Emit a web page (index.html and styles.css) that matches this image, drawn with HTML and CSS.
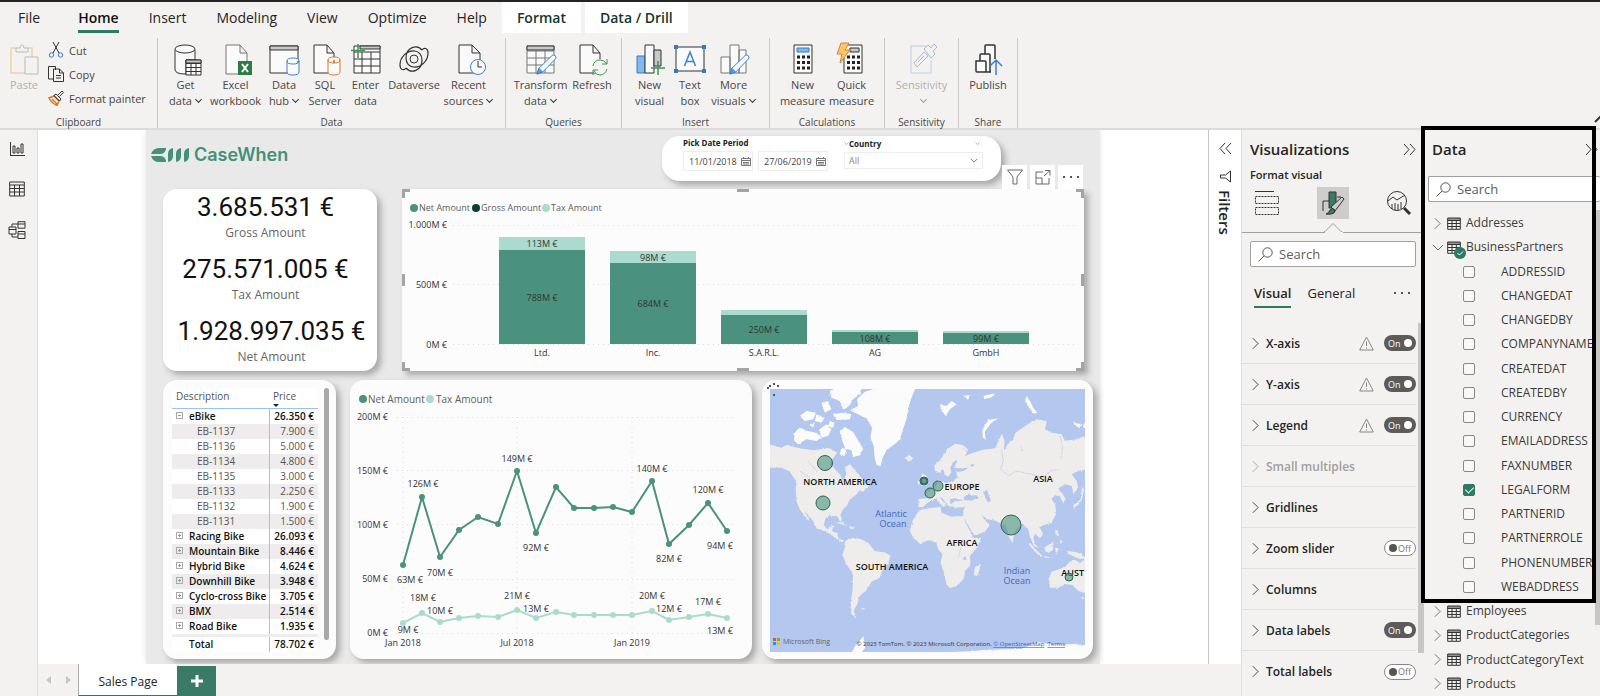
FILE: index.html
```
<!DOCTYPE html>
<html lang="en">
<head>
<meta charset="utf-8">
<title>Sales Page - Report editor</title>
<link rel="stylesheet" href="styles.css">
</head>
<body>
<svg class="defs" width="0" height="0" aria-hidden="true">
  <symbol id="chev-r" viewBox="0 0 8 14"><path d="M1 1l6 6-6 6"/></symbol>
  <symbol id="chev-d" viewBox="0 0 12 7"><path d="M1 1l5 5 5-5"/></symbol>
  <symbol id="dbl-r" viewBox="0 0 13 13"><path d="M1 1l5 5.500-5 5.500M7 1l5 5.500-5 5.500"/></symbol>
  <symbol id="warn" viewBox="0 0 15 15"><path d="M7.500 1L14.300 14H.7zM7.500 5.500v4.500M7.500 11.300v1.200"/></symbol>
  <symbol id="lens" viewBox="0 0 15 15"><circle cx="9.500" cy="5.500" r="4.700"/><path d="M6 9L.6 14.400"/></symbol>
  <symbol id="table" viewBox="0 0 14 13"><path d="M.7 1h12.600v11.300H.7zM.7 3.500h12.600M.7 6.500h12.600M.7 9.500h12.600M5 3v9M9.300 3v9M.7 2h12.600"/></symbol>
  <symbol id="cal" viewBox="0 0 10 9"><path d="M.5 1.500h9v7h-9zM.5 3.500h9M2.500 0v2M7.500 0v2M2 5.500h6M2 7h6" /></symbol>
  <symbol id="pencil" viewBox="0 0 22 22"><path class="lightblue" d="M1 21l2-6L17 1.500q2-1 3.200.3t.3 3.200L7 19z"/><path class="deepblue" d="M1 21l2-6 4 4z"/></symbol>
</svg>
<div class="app">
  <header class="ribbon">
    <nav class="tabs">
      <button class="tab tab-file">File</button>
      <button class="tab active"><span>Home</span></button>
      <button class="tab">Insert</button>
      <button class="tab">Modeling</button>
      <button class="tab">View</button>
      <button class="tab">Optimize</button>
      <button class="tab">Help</button>
      <button class="tab context">Format</button>
      <button class="tab context">Data / Drill</button>
    </nav>
    <div class="groups">
      <section class="group g-clip">
        <div class="tools">
          <button class="tool w-48 disabled">
            <svg viewBox="0 0 32 32"><path stroke="#ecd3a8" stroke-width="1.500" d="M9 4H3v25h14M19 4h5v9"/><path stroke="#bbb" d="M8 8V4h4q0-3 2-3t2 3h4v4zM17 13h13v17H17z"/></svg>
            Paste</button>
          <div class="stack">
            <button class="mini"><svg viewBox="0 0 16 16"><path d="M5 0l6 11M11 0L5 11"/><circle class="blue" cx="3.500" cy="13" r="2.200"/><circle class="blue" cx="12.500" cy="13" r="2.200"/></svg>Cut</button>
            <button class="mini"><svg viewBox="0 0 16 16"><path d="M5 13H.5V.5h7V4M5.500 3h6l4 4v8.500h-10zM11.500 3v4h4M8 9.500h5M8 12h5"/></svg>Copy</button>
            <button class="mini"><svg viewBox="0 0 16 16"><path class="orange" stroke-width="1.500" d="M1 8l5-2 5 5-2 4.500q-5-2-8-7.500zM4 9l5 5"/><path d="M6 5.500L8 4l5 5-1.500 2zM10 5l4-4 1.500 1.500-4 4"/></svg>Format painter</button>
          </div>
        </div>
        <h2>Clipboard</h2>
      </section>
      <section class="group g-data">
        <div class="tools">
          <button class="tool w-46"><svg viewBox="0 0 32 32"><path class="w" d="M5 6v20q1 4 10 4h1V16h9V6"/><ellipse class="w" cx="15" cy="5" rx="10" ry="4"/><path class="w" d="M16 16h15v15H16z"/><path class="grey" d="M16 16h15v3H16z"/><path d="M16 19.500h15M16 23.500h15M16 27.500h15M21 19v12M26 19v12"/></svg>Get<br>data<i class="caret"></i></button>
          <button class="tool w-54"><svg viewBox="0 0 32 32"><path class="w pale" d="M6 1h14l7 8v21H6zM20 1v8h7"/><path class="fill-green" d="M18 17h14v14H18z"/><path stroke="#fff" stroke-width="2" d="M22 20l6 8M28 20l-6 8"/></svg>Excel<br>workbook</button>
          <button class="tool w-43"><svg viewBox="0 0 32 32"><path class="w" d="M2 2h28v27H2z"/><path class="grey" d="M2 2h28v4H2z"/><path class="w blue" d="M19 17q0-3 6-3t6 3v11q0 3-6 3t-6-3zM19 17q0 3 6 3t6-3"/></svg>Data<br>hub<i class="caret"></i></button>
          <button class="tool w-39"><svg viewBox="0 0 32 32"><path class="w" d="M5 1h13l7 8v20H5zM18 1v8h7"/><path class="w orange" d="M19 16q0-3 6-3t6 3v12q0 3-6 3t-6-3zM19 16q0 3 6 3t6-3"/></svg>SQL<br>Server</button>
          <button class="tool w-42"><svg viewBox="0 0 32 32"><path class="w" d="M4 2h26v27H4zM4 8h26M4 15h26M4 22h26M12 8v21M21 8v21"/><path class="grey" d="M10 2h20v3H10z"/><path class="green" stroke-width="1.500" d="M8 0v14M1 6.500h14"/></svg>Enter<br>data</button>
          <button class="tool w-55"><svg viewBox="0 0 32 32"><circle cx="16" cy="15" r="4"/><path stroke-width="1.200" d="M15 23c8 1 15-6 15-14 0-5-4-6-6-3M24 6c-5-6-16-3-16 8 0 5 3 9 8 9M17 7C9 6 2 13 2 21c0 5 4 6 6 3M8 24c5 6 16 3 16-8 0-5-3-9-8-9"/></svg>Dataverse</button>
          <button class="tool w-54"><svg viewBox="0 0 32 32"><path class="w" d="M6 1h13l8 8v20H6zM19 1v8h8"/><circle class="w blue" cx="25" cy="23" r="7.500"/><path d="M25 17v6h4"/></svg>Recent<br>sources<i class="caret"></i></button>
        </div>
        <h2>Data</h2>
      </section>
      <section class="group g-queries">
        <div class="tools">
          <button class="tool w-57"><svg viewBox="0 0 32 32"><path class="w pale" d="M2 2h27v27H2zM2 7h27M2 14h27M2 21h27M11 7v22M20 7v22"/><path class="grey" d="M2 2h27v4H2z"/><use href="#pencil" x="11" y="10" width="21" height="21"/></svg>Transform<br>data<i class="caret"></i></button>
          <button class="tool w-46"><svg viewBox="0 0 32 32"><path class="w" d="M4 1h13l7 8v20H4zM17 1v8h7"/><circle cx="24" cy="23" r="8" fill="#f3f2f1" stroke="none"/><path class="green" d="M17 22q1-6 7-6 4 0 7 4M31 15v5h-5M31 25q-2 6-7 6-4 0-6-4M17 31v-5h5"/></svg>Refresh</button>
        </div>
        <h2>Queries</h2>
      </section>
      <section class="group g-insert">
        <div class="tools">
          <button class="tool w-42"><svg viewBox="0 0 32 32"><path class="fill-blue" d="M3 12h8v17H3z"/><path class="w" d="M11 1h9v28h-9z"/><path class="grey" d="M20 6h7v16h-7z"/><path class="green" stroke-width="1.500" d="M24 17v14M17 24h14"/></svg>New<br>visual</button>
          <button class="tool w-39"><svg viewBox="0 0 32 32"><path class="w" d="M2 3h28v24H2z"/><path fill="#3a78bd" stroke="none" d="M0 1h4v4H0zM28 1h4v4h-4zM0 25h4v4H0zM28 25h4v4h-4z"/><path class="blue" stroke-width="1.500" d="M10.500 22L16 8l5.500 14M12.500 17.500h7"/></svg>Text<br>box</button>
          <button class="tool w-48"><svg viewBox="0 0 32 32"><path class="w pale" d="M3 13h9v16H3zM12 1h9v28h-9zM21 6h7v23h-7z"/><use href="#pencil" x="11" y="10" width="21" height="21"/></svg>More<br>visuals<i class="caret"></i></button>
        </div>
        <h2>Insert</h2>
      </section>
      <section class="group g-calc">
        <div class="tools">
          <button class="tool w-49"><svg viewBox="0 0 32 32"><path class="w" d="M7 1h18v28H7z"/><path class="fill-blue" d="M10 4h12v4H10z"/><path class="dots" d="M10 13h13M10 18.500h13M10 24h13"/></svg>New<br>measure</button>
          <button class="tool w-49"><svg viewBox="0 0 32 32"><path class="w" d="M8 1h18v28H8z"/><path class="grey" d="M14 4h9v4h-9z"/><path class="dots" d="M11 13h13M11 18.500h13M11 24h13"/><path fill="#f9c56b" stroke="#d8832b" d="M5-1h8l-4 7h5L4 19l2-9H1z"/></svg>Quick<br>measure</button>
        </div>
        <h2>Calculations</h2>
      </section>
      <section class="group g-sens">
        <div class="tools">
          <button class="tool w-57 disabled"><svg viewBox="0 0 32 32"><path stroke="#b9cde2" d="M20 2H5v27h20V17"/><path stroke="#a9bccf" d="M8 19L18 8l4 4-11 11zM12 18l6-6M18 5l4-4 3 3 3-4 3 3-4 4 2 3-4 4z"/></svg>Sensitivity<br><i class="caret"></i></button>
        </div>
        <h2>Sensitivity</h2>
      </section>
      <section class="group g-share">
        <div class="tools">
          <button class="tool w-49"><svg viewBox="0 0 32 32"><path class="w bold" d="M13 10V2q0-1 1-1h8q1 0 1 1v13M8 17v-6q0-1 1-1h8q1 0 1 1v17M4 17h9q1 0 1 1v10H5q-1 0-1-1zM14 28h5"/><path class="blue bold" d="M24 31V16M18 22l6-6 6 6"/></svg>Publish</button>
        </div>
        <h2>Share</h2>
      </section>
    </div>
  </header>

  <nav class="rail">
    <button aria-label="Report view"><svg viewBox="0 0 16 16"><path d="M1.500 1v14M1 14.500h15M4 5h2v7H4zM8 7h2v5H8zM12 3h2v9h-2z"/></svg></button>
    <button aria-label="Data view"><svg viewBox="0 0 16 16"><path d="M.7 1h14.600v14H.7zM.7 4h14.600M.7 7.500h14.600M.7 11h14.600M5.500 4v11M10.500 4v11"/></svg></button>
    <button aria-label="Model view"><svg viewBox="0 0 18 18"><path d="M1 6h7v7H1zM1 8.500h7M10 .7h7v6.500h-7zM10 3h7M10 10.500h7v7h-7zM10 13h7M4 6V3h6M4 13v3h6"/></svg></button>
  </nav>

  <main class="canvas">
    <div class="page">
      <div class="page-head">
        <div class="logo">
          <svg viewBox="0 0 39 15"><path d="M15 0v1q-1 5-6 5H0Q2 0 8 0zM0 8h9q5 0 6 5v1H8Q2 14 0 8zM17 14V6q0-5 5-6v8q0 5-5 6zM25 14V6q0-5 5-6v8q0 5-5 6zM33 14V6q0-5 5-6v8q0 5-5 6z"/></svg>
          <span>CaseWhen</span>
        </div>
        <div class="slicers">
          <fieldset class="dates">
            <legend>Pick Date Period</legend>
            <label><input type="text" value="11/01/2018" aria-label="Start date"><svg viewBox="0 0 10 9"><use href="#cal"/></svg></label>
            <label><input type="text" value="27/06/2019" aria-label="End date"><svg viewBox="0 0 10 9"><use href="#cal"/></svg></label>
          </fieldset>
          <div class="country">
            <div class="country-head"><svg viewBox="0 0 12 7"><use href="#chev-d"/></svg><label for="country">Country</label><svg class="end" viewBox="0 0 12 7"><use href="#chev-d"/></svg></div>
            <div class="select"><select id="country"><option>All</option></select><svg viewBox="0 0 12 7"><use href="#chev-d"/></svg></div>
          </div>
        </div>
      </div>
      <div class="row top-row">
        <section class="card kpis">
          <dl><dd>3.685.531 €</dd><dt>Gross Amount</dt></dl>
          <dl><dd>275.571.005 €</dd><dt>Tax Amount</dt></dl>
          <dl class="wide"><dd>1.928.997.035 €</dd><dt>Net Amount</dt></dl>
        </section>
        <section class="card bars">
          <div class="visual-tools">
            <button aria-label="Filters"><svg viewBox="0 0 16 16"><path d="M.5 1h15L10 8v7H6V8z"/></svg></button>
            <button aria-label="Focus mode"><svg viewBox="0 0 16 16"><path d="M8 3H1v12h13V9M1 9h6v6M10 1.500h5v5M15 1.500L9 7"/></svg></button>
            <button aria-label="More options"><svg viewBox="0 0 16 16"><path class="pips" d="M0 7h2v2H0zM7 7h2v2H7zM14 7h2v2h-2z"/></svg></button>
          </div>
          <svg class="chart" viewBox="0 0 682 182" role="img" aria-label="Net, gross and tax amount by legal form">
            <g class="legend small"><circle class="net" cx="12" cy="19" r="4"/><text x="17" y="22">Net Amount</text><circle class="gross" cx="74" cy="19" r="4"/><text x="79" y="22">Gross Amount</text><circle class="tax" cx="144" cy="19" r="4"/><text x="149" y="22">Tax Amount</text></g>
            <path class="grid" d="M51 36.500h623M51 95.500h623M51 155.500h623"/>
            <g class="ends"><text x="45" y="39">1.000M €</text><text x="45" y="99">500M €</text><text x="45" y="159">0M €</text></g>
            <path class="net" d="M97 61h86v94H97zM208 74h86v81h-86zM319 126h86v29h-86zM430 143h86v12h-86zM541 144h86v11h-86z"/>
            <path class="tax" d="M97 48h86v13H97zM208 62h86v12h-86zM319 121h86v5h-86zM430 141h86v2h-86zM541 142h86v2h-86z"/>
            <g class="mid"><text x="140" y="58">113M €</text><text x="140" y="112">788M €</text><text x="251" y="72">98M €</text><text x="251" y="118">684M €</text><text x="362" y="144">250M €</text><text x="473" y="153">108M €</text><text x="584" y="153">99M €</text>
            <text x="140" y="167">Ltd.</text><text x="251" y="167">Inc.</text><text x="362" y="167">S.A.R.L.</text><text x="473" y="167">AG</text><text x="584" y="167">GmbH</text></g>
            <path class="handles" d="M0 0h8v3H3v6H0zM674 0h8v9h-3V3h-5zM0 173h3v6h5v3H0zM679 173h3v9h-8v-3h5zM335 0h12v3h-12zM335 179h12v3h-12zM0 85h3v12H0zM679 85h3v12h-3z"/>
          </svg>
        </section>
      </div>
      <div class="row bottom-row">
        <section class="card matrix">
          <table>
            <thead><tr><th>Description</th><th class="sorted">Price</th></tr></thead>
            <tbody>
              <tr class="parent"><th><i class="tog minus"></i>eBike</th><td>26.350 €</td></tr>
              <tr><th>EB-1137</th><td>7.900 €</td></tr>
              <tr><th>EB-1136</th><td>5.000 €</td></tr>
              <tr><th>EB-1134</th><td>4.800 €</td></tr>
              <tr><th>EB-1135</th><td>3.000 €</td></tr>
              <tr><th>EB-1133</th><td>2.250 €</td></tr>
              <tr><th>EB-1132</th><td>1.900 €</td></tr>
              <tr><th>EB-1131</th><td>1.500 €</td></tr>
              <tr class="parent"><th><i class="tog"></i>Racing Bike</th><td>26.093 €</td></tr>
              <tr class="parent"><th><i class="tog"></i>Mountain Bike</th><td>8.446 €</td></tr>
              <tr class="parent"><th><i class="tog"></i>Hybrid Bike</th><td>4.624 €</td></tr>
              <tr class="parent"><th><i class="tog"></i>Downhill Bike</th><td>3.948 €</td></tr>
              <tr class="parent"><th><i class="tog"></i>Cyclo-cross Bike</th><td>3.705 €</td></tr>
              <tr class="parent"><th><i class="tog"></i>BMX</th><td>2.514 €</td></tr>
              <tr class="parent"><th><i class="tog"></i>Road Bike</th><td>1.935 €</td></tr>
            </tbody>
            <tfoot><tr><th>Total</th><td>78.702 €</td></tr></tfoot>
          </table>
          <div class="scroll"></div>
        </section>
        <section class="card lines">
          <svg class="chart" viewBox="0 0 402 279" role="img" aria-label="Net and tax amount by month">
            <defs>
              <marker id="net-dot" viewBox="0 0 6 6" refX="3" refY="3" markerWidth="6" markerHeight="6" markerUnits="userSpaceOnUse"><circle class="net" cx="3" cy="3" r="3" stroke="none"/></marker>
              <marker id="tax-dot" viewBox="0 0 6 6" refX="3" refY="3" markerWidth="6" markerHeight="6" markerUnits="userSpaceOnUse"><circle class="tax" cx="3" cy="3" r="3" stroke="none"/></marker>
            </defs>
            <g class="legend"><circle class="net" cx="13" cy="19" r="4"/><text x="18" y="23">Net Amount</text><circle class="tax" cx="80" cy="19" r="4"/><text x="86" y="23">Tax Amount</text></g>
            <path class="grid" d="M47 37.500h338M47 90.500h338M47 144.500h338M47 199.500h338M47 253.500h338M53 37v216M167 37v216M282 37v216"/>
            <g class="ends"><text x="38" y="40">200M €</text><text x="38" y="94">150M €</text><text x="38" y="148">100M €</text><text x="38" y="202">50M €</text><text x="38" y="256">0M €</text></g>
            <polyline class="line net-line" points="53,185 72,117 90,177 109,150 128,137 148,144 167,91 186,153 206,107 224,128 244,128 263,127 282,132 302,101 319,164 339,145 358,123 377,151"/>
            <polyline class="line tax-line" points="53,243 72,233 90,242 109,238 128,236 148,237 167,230 186,238 206,232 224,235 244,235 263,235 282,235 302,231 319,240 339,237 358,234 377,238"/>
            <g class="mid"><text x="73" y="107">126M €</text><text x="167" y="82">149M €</text><text x="302" y="92">140M €</text><text x="358" y="113">120M €</text><text x="186" y="171">92M €</text><text x="319" y="182">82M €</text><text x="370" y="169">94M €</text><text x="90" y="196">70M €</text><text x="60" y="203">63M €</text><text x="73" y="221">18M €</text><text x="90" y="234">10M €</text><text x="167" y="219">21M €</text><text x="186" y="232">13M €</text><text x="302" y="219">20M €</text><text x="319" y="232">12M €</text><text x="358" y="225">17M €</text><text x="370" y="254">13M €</text><text x="58" y="253">9M €</text>
            <text x="53" y="266">Jan 2018</text><text x="167" y="266">Jul 2018</text><text x="282" y="266">Jan 2019</text></g>
          </svg>
        </section>
        <section class="card map">
          <svg class="chart" viewBox="0 0 315 263" role="img" aria-label="Map of sales by country">
            <defs><filter id="coast" x="0" y="0" width="100%" height="100%"><feTurbulence type="fractalNoise" baseFrequency=".14" numOctaves="3" seed="4"/><feDisplacementMap in="SourceGraphic" scale="7" xChannelSelector="R" yChannelSelector="G"/></filter></defs>
            <rect class="sea" width="315" height="263"/>
            <svg viewBox="61 54 944 789" width="315" height="263" preserveAspectRatio="none">
              <g filter="url(#coast)">
                <path class="ice" d="M300 118L325 105 322 85 345 62 400 45H500L485 80 475 110 470 145 458 180 450 205 440 215 410 238 398 262 392 286 380 282 374 255 372 225 362 200 367 170 350 142z"/>
                <path class="ice" d="M240 60l20-10h75l-5 20-20 15-15 25-15 5-10-25-25-10zM215 95l20-5 10 25-20 10zM150 135l20-15 30 5-10 20-25 5zM200 130l25 10-10 15-20-5zM135 185l15-15 25 10 25 5 15 15-15 10-30-5-25 15-12-12zM210 175l20-15 15 15-10 20-22 5zM250 130l30-5 25 5-5 15-40 2zM240 150l15 5-5 15-15-5zM270 180l15-12 25 15 15 25 15 25-10 20-20 5-5-20-18-5-10-25zM275 230l15 5-5 20-15-5zM180 160l15-5-5 15zM570 100l20 5 15-15 15 10-20 15-12 20-12-15zM640 75l20-3-5 12zM700 75l35-8-10 12-20 5zM830 75l10 15 10 20 12 15-10 3-18-22-8-20zM970 155l30 5-15 10zM1000 160h10v10h-10z"/>
                <path class="ice" d="M745 142l-25 18-15 22 2 25-8-8-2-22 18-30zM61 865l80-15 100 0 65-4 10-20 25-30 5 35-15 18h130l200-8 50-5 100-2 55-20 55 8 50-3 45 5v40H61z"/>
                <path class="land" d="M50 218L95 230 110 222 150 232 190 238 240 232 262 245 250 262 240 280 262 300 272 312 280 332 290 310 285 288 300 280 315 295 325 310 345 330 358 345 340 362 330 358 318 372 300 385 292 405 278 418 272 432 278 454 270 450 262 436 240 434 228 440 222 462 232 475 245 463 254 466 246 480 262 486 266 503 284 508 276 514 258 502 240 488 222 480 200 470 190 450 165 420 180 450 172 445 150 415 140 390 138 350 140 330 118 300 95 290 50 290zM255 452l25 3 12 10-20-6zM293 466l22 3-8 6zM465 262l13-10 12 10-13 10z"/>
                <path class="land" d="M285 512L300 500 330 503 355 515 375 540 410 545 422 556 415 578 400 592 390 620 365 632 352 655 330 675 322 700 312 720 320 740 305 730 302 700 308 660 310 610 290 580 278 552 285 530zM335 710l12 2-10 4z"/>
                <path class="land" d="M508 418L545 410 572 408 575 425 605 437 640 435 648 455 660 480 672 502 694 500 682 530 660 555 662 582 645 600 642 622 622 645 600 651 590 640 580 600 572 575 578 550 565 535 560 515 535 508 510 518 490 500 480 480 488 450zM690 578l0 14-8 24-10-4 2-20z"/>
                <path class="land" d="M506 408V384L532 382 528 368 545 355 560 345 565 325 575 332 590 336 610 332 624 318 618 304 640 300 655 290 625 292 612 290 622 270 610 272 602 290 604 305 594 318 585 310 580 295 568 305 556 300 553 284 575 262 592 235 615 218 640 222 655 236 645 255 670 245 700 236 735 232 748 205 756 188 764 210 762 240 775 215 790 207 795 187 830 162 860 145 890 150 885 175 905 185 935 190 945 210 980 205 1015 190V295L985 300 965 310 980 330 985 352 970 368 966 345 945 340 925 352 935 365 948 385 940 397 930 377 915 372 905 385 917 402 918 430 905 455 880 463 868 468 880 490 870 502 855 488 850 500 856 520 868 532 852 524 840 498 835 475 820 460 800 472 792 492 788 516 778 500 768 465 755 460 740 450 712 445 692 430 712 455 720 462 705 482 680 492 672 492 655 462 640 438 640 420 645 408 615 410 600 402 612 392 640 388 615 382 600 385 604 410 590 400 578 382 570 378 587 402 580 408 568 395 560 382 545 388 530 398 520 408zM514 345l17-2 6-14-8-16-12-5-4 14 8 10zM504 330l8 2-4 10-6-4z"/>
                <path class="land" d="M978 425l-8-14 14-8 12-18 6-30-6-8-4 38-22 18zM840 515l20 22 18 18-6 2-22-20-14-18zM880 555l32 6-25-1zM884 530l14-10 12-8 0 22-14 12-10-6zM915 530l12 2-8 20zM915 478l8 0 4 20-10-8zM930 508l8 2-6 10zM950 540l22 2 24 8 12 15-22-2-30-14zM896 624L905 602 945 588 960 572 975 566 990 576 1012 558V668L985 660 968 642 945 640 925 650 900 650zM994 677l10 2-6 8zM784 505l6 4-2 6z"/>
                <path class="sea" d="M642 378l14-10 8 6 14-2 8 8-20 8-24 0zM700 360l12-2 4 14 8 18-10 4-8-14zM660 282l14-4-6 10zM640 560l8-4 2 10-8 2z"/>
                <path class="river" d="M755 235l5 35-8 25 25 20 20-15 50 10 30 10 25-20 25-5M930 195l8 30-5 40M640 230l15 15M740 200l-2 30M575 240l-15 35M820 240l-10-15M230 345l15-10M200 300l-25-30M150 300l30 20M625 560l8-30"/>
              </g>
            </svg>
            <g class="places"><text x="70" y="96">NORTH AMERICA</text><text x="192" y="101">EUROPE</text><text x="273" y="93">ASIA</text><text x="192" y="157">AFRICA</text><text x="122" y="181">SOUTH AMERICA</text></g>
            <text class="place" x="314" y="187">AUST</text>
            <g class="oceans"><text x="121" y="128">Atlantic</text><text x="123" y="138">Ocean</text><text x="247" y="185">Indian</text><text x="247" y="195">Ocean</text></g>
            <g class="bubbles"><circle cx="55" cy="74" r="7.500"/><circle cx="53" cy="114" r="7"/><circle cx="154" cy="92" r="4"/><circle cx="154" cy="92" r="3"/><circle cx="168" cy="97" r="5"/><circle cx="160" cy="104" r="5"/><circle cx="241" cy="136" r="10"/><circle cx="299" cy="188" r="4"/></g>
            <path class="flat" fill="#f25022" d="M3 249h3v3H3z"/><path class="flat" fill="#7fba00" d="M7 249h3v3H7z"/><path class="flat" fill="#00a4ef" d="M3 253h3v3H3z"/><path class="flat" fill="#ffb900" d="M7 253h3v3H7z"/>
            <text class="bing" x="13" y="255">Microsoft Bing</text>
            <text class="credit" x="295" y="257">© 2023 TomTom, © 2023 Microsoft Corporation, <a href="#osm">© OpenStreetMap</a>&#160; <a href="#terms">Terms</a></text>
            <path class="specks" d="M3 5h2v2H3z"/>
          </svg>
          <svg class="corner" viewBox="0 0 12 6"><path d="M0 4h2v2H0zM2 2h2v2H2zM6 0h2v2H6zM10 2h2v2h-2z"/></svg>
        </section>
      </div>
    </div>
  </main>

  <aside class="filters">
    <button aria-label="Expand filters"><svg class="flip" viewBox="0 0 13 13"><use href="#dbl-r"/></svg></button>
    <svg class="horn" viewBox="0 0 12 13"><path d="M11 1v11L6 8H1V5h5z"/></svg>
    <h2>Filters</h2>
  </aside>

  <footer class="sheets">
    <button class="step" aria-label="Previous page"><svg viewBox="0 0 5 8"><path d="M5 0v8L0 4z"/></svg></button>
    <button class="step" aria-label="Next page"><svg viewBox="0 0 5 8"><path d="M0 0v8l5-4z"/></svg></button>
    <button class="sheet">Sales Page</button>
    <button class="add" aria-label="New page"><svg viewBox="0 0 12 12"><path d="M4.500 0h3v4.500H12v3H7.500V12h-3V7.500H0v-3h4.500z"/></svg></button>
  </footer>

  <aside class="viz">
    <div class="pane-head"><h2>Visualizations</h2><button aria-label="Collapse"><svg viewBox="0 0 13 13"><use href="#dbl-r"/></svg></button></div>
    <h3>Format visual</h3>
    <div class="modes">
      <button aria-label="Build visual"><svg viewBox="0 0 26 26"><path d="M1 1.500h19"/><path stroke-dasharray="2 1" d="M1.500 6.500h23v7h-23zM1.500 17.500h23v7h-23z"/></svg></button>
      <button class="on" aria-label="Format visual"><svg viewBox="0 0 26 26"><path d="M3 21V11h6M17 7h4"/><path fill="#3b7a67" d="M9 2h7v16H9z"/><path fill="#cfcdcb" d="M11 17L22 7l2 2-9 12z"/><path fill="#3b7a67" d="M6 24q3-1 4-4 2-2 4-1 2 2 0 4-3 2-8 1z"/></svg></button>
      <button aria-label="Analytics"><svg viewBox="0 0 26 26"><circle cx="11" cy="11" r="9.500"/><path d="M2 11l5-4 4 3 8-5M6 19v-5M9 20v-7M12 20v-6M15 19v-7"/><path stroke-width="3" d="M18 18l6 6"/></svg></button>
    </div>
    <svg class="notch" viewBox="0 0 18 10"><path class="cover" d="M1 9l8-8 8 8v1H1z"/><path d="M0 8.500h1l8-8 8 8h1"/></svg>
    <label class="search"><svg viewBox="0 0 15 15"><use href="#lens"/></svg><input type="text" placeholder="Search" aria-label="Search format options"></label>
    <div class="subtabs"><button class="on">Visual</button><button>General</button><button class="more" aria-label="More"><svg viewBox="0 0 16 16"><path class="pips" d="M0 7h2v2H0zM7 7h2v2H7zM14 7h2v2h-2z"/></svg></button></div>
    <div class="options">
      <div class="opt"><button><svg viewBox="0 0 8 14"><use href="#chev-r"/></svg>X-axis</button><svg class="warn" viewBox="0 0 15 15"><use href="#warn"/></svg><label class="switch"><span>On</span><input type="checkbox" checked aria-label="X-axis"></label></div>
      <div class="opt"><button><svg viewBox="0 0 8 14"><use href="#chev-r"/></svg>Y-axis</button><svg class="warn" viewBox="0 0 15 15"><use href="#warn"/></svg><label class="switch"><span>On</span><input type="checkbox" checked aria-label="Y-axis"></label></div>
      <div class="opt"><button><svg viewBox="0 0 8 14"><use href="#chev-r"/></svg>Legend</button><svg class="warn" viewBox="0 0 15 15"><use href="#warn"/></svg><label class="switch"><span>On</span><input type="checkbox" checked aria-label="Legend"></label></div>
      <div class="opt"><button disabled><svg viewBox="0 0 8 14"><use href="#chev-r"/></svg>Small multiples</button></div>
      <div class="opt"><button><svg viewBox="0 0 8 14"><use href="#chev-r"/></svg>Gridlines</button></div>
      <div class="opt"><button><svg viewBox="0 0 8 14"><use href="#chev-r"/></svg>Zoom slider</button><label class="switch off"><input type="checkbox" aria-label="Zoom slider"><span>Off</span></label></div>
      <div class="opt"><button><svg viewBox="0 0 8 14"><use href="#chev-r"/></svg>Columns</button></div>
      <div class="opt"><button><svg viewBox="0 0 8 14"><use href="#chev-r"/></svg>Data labels</button><label class="switch"><span>On</span><input type="checkbox" checked aria-label="Data labels"></label></div>
      <div class="opt"><button><svg viewBox="0 0 8 14"><use href="#chev-r"/></svg>Total labels</button><label class="switch off"><input type="checkbox" aria-label="Total labels"><span>Off</span></label></div>
      <div class="thumb"></div>
    </div>
  </aside>

  <aside class="data">
    <div class="pane-head"><h2>Data</h2><button aria-label="Collapse"><svg viewBox="0 0 13 13"><use href="#dbl-r"/></svg></button></div>
    <label class="search"><svg viewBox="0 0 15 15"><use href="#lens"/></svg><input type="text" placeholder="Search" aria-label="Search fields"></label>
    <ul class="tree">
      <li><button><svg class="arrow" viewBox="0 0 8 14"><use href="#chev-r"/></svg><svg class="tbl" viewBox="0 0 14 13"><use href="#table"/></svg>Addresses</button></li>
      <li><button><svg class="arrow down" viewBox="0 0 12 7"><use href="#chev-d"/></svg><svg class="tbl" viewBox="0 0 14 13"><use href="#table"/></svg>BusinessPartners<svg class="badge" viewBox="0 0 12 12"><circle cx="6" cy="6" r="6"/><path d="M3.500 6l2 2 3.500-3.500"/></svg></button></li>
      <li><label><input type="checkbox">ADDRESSID</label></li>
      <li><label><input type="checkbox">CHANGEDAT</label></li>
      <li><label><input type="checkbox">CHANGEDBY</label></li>
      <li><label><input type="checkbox">COMPANYNAME</label></li>
      <li><label><input type="checkbox">CREATEDAT</label></li>
      <li><label><input type="checkbox">CREATEDBY</label></li>
      <li><label><input type="checkbox">CURRENCY</label></li>
      <li><label><input type="checkbox">EMAILADDRESS</label></li>
      <li><label><input type="checkbox">FAXNUMBER</label></li>
      <li><label><input type="checkbox" checked>LEGALFORM</label></li>
      <li><label><input type="checkbox">PARTNERID</label></li>
      <li><label><input type="checkbox">PARTNERROLE</label></li>
      <li><label><input type="checkbox">PHONENUMBER</label></li>
      <li><label><input type="checkbox">WEBADDRESS</label></li>
      <li><button><svg class="arrow" viewBox="0 0 8 14"><use href="#chev-r"/></svg><svg class="tbl" viewBox="0 0 14 13"><use href="#table"/></svg>Employees</button></li>
      <li><button><svg class="arrow" viewBox="0 0 8 14"><use href="#chev-r"/></svg><svg class="tbl" viewBox="0 0 14 13"><use href="#table"/></svg>ProductCategories</button></li>
      <li><button><svg class="arrow" viewBox="0 0 8 14"><use href="#chev-r"/></svg><svg class="tbl" viewBox="0 0 14 13"><use href="#table"/></svg>ProductCategoryText</button></li>
      <li><button><svg class="arrow" viewBox="0 0 8 14"><use href="#chev-r"/></svg><svg class="tbl" viewBox="0 0 14 13"><use href="#table"/></svg>Products</button></li>
    </ul>
    <div class="thumb"></div>
    <div class="highlight"></div>
    <svg class="collapse" viewBox="0 0 12 7"><path d="M1 6l5-5 5 5"/></svg>
  </aside>
</div>
</body>
</html>
```
FILE: styles.css
```
* { box-sizing: border-box; }
body { margin: 0; font-family: "Open Sans", "Noto Sans", sans-serif; font-size: 12px; color: #252423; background: #f3f2f1; }
button, input, select { font: inherit; color: inherit; background: none; border: 0; padding: 0; margin: 0; }
h2, h3, dl, dd, dt, ul, fieldset, legend { margin: 0; padding: 0; border: 0; list-style: none; font-weight: 400; }
svg { fill: none; stroke: #333; stroke-width: 1; display: block; flex: none; }
svg text { fill: #333; stroke: none; }
.defs { position: absolute; }
.pips { fill: #555; stroke: none; }
.flat { stroke: none; }

.app { display: grid; min-height: 100vh; overflow: hidden; grid-template-columns: 38px minmax(0, 1fr) 33px 183px 176px; grid-template-rows: 130px minmax(534px, 1fr) 32px; }
.ribbon { grid-column: 1 / -1; border-top: 2px solid #262324; border-bottom: 2px solid #dcdbda; display: flex; flex-direction: column; }

/* Ribbon */
.tabs { display: flex; height: 31px; padding-left: 3px; font-size: 14px; }
.tab { padding: 0 15px; }
.tab-file { margin-right: 8px; }
.tab.active { font-weight: 600; color: #111; }
.tab.active span { display: block; height: 31px; line-height: 31px; border-bottom: 3px solid #2b7a64; }
.tab.context { background: #fff; font-weight: 600; color: #12382e; margin-right: 4px; }
.groups { display: flex; flex: 1; padding-top: 5px; color: #484644; font-size: 11px; }
.group { display: flex; flex-direction: column; align-items: center; justify-content: space-between; border-right: 1px solid #c8c6c4; }
.group h2 { font-size: 10px; line-height: 12px; }
.g-clip { width: 158px; align-items: stretch; text-align: center; }
.g-data { width: 348px; }
.g-queries { width: 116px; }
.g-insert { width: 148px; }
.g-calc { width: 115px; }
.g-sens { width: 74px; }
.g-share { width: 59px; }
.tools { display: flex; }
.g-data .tools, .g-insert .tools { margin-right: 5px; }
.tool { display: block; padding-top: 6px; line-height: 16px; white-space: nowrap; text-align: center; align-self: flex-start; }
.tool svg { width: 32px; height: 32px; margin: 0 auto 1px; overflow: visible; }
.w-39 { width: 39px; } .w-42 { width: 42px; } .w-43 { width: 43px; } .w-46 { width: 46px; } .w-48 { width: 48px; } .w-49 { width: 49px; } .w-54 { width: 54px; } .w-55 { width: 55px; } .w-57 { width: 57px; }
.disabled { color: #b3b0ad; }
.caret { display: inline-block; width: 5px; height: 5px; margin: 0 1px 3px 4px; border: solid #333; border-width: 0 1px 1px 0; transform: rotate(45deg); }
.disabled .caret { border-color: #a19f9d; }
.mini { display: flex; align-items: center; gap: 5px; height: 24px; white-space: nowrap; }
.mini svg { width: 16px; height: 16px; }
.w { fill: #fafafa; }
.pale { stroke: #777; }
.blue { stroke: #3b80cf; }
.orange { stroke: #d9782d; }
.green { stroke: #3f9450; }
.grey { fill: #c8c8c8; }
.fill-blue { fill: #83b8ee; stroke: #3a78bd; }
.fill-green { fill: #2b7d45; stroke: none; }
.lightblue { fill: #f4f9ff; stroke: #3b80cf; }
.deepblue { fill: #5b9ee0; stroke: #3b80cf; }
.dots { stroke: #222; stroke-width: 3; stroke-dasharray: 3 2; }
.bold { stroke-width: 1.5; }

/* Left rail */
.rail { grid-row: 2 / 4; border-right: 1px solid #e1dfdd; display: flex; flex-direction: column; align-items: center; gap: 24px; padding: 11px 4px 0 0; }
.rail svg { width: 16px; height: 16px; }
.rail button:last-child svg { width: 18px; height: 18px; }

/* Report canvas */
.canvas { background: #fff; padding: 0 108px 0 108px; display: flex; overflow: hidden; }
.page { flex: 1; min-width: 0; background: #e9e9e9; box-shadow: 0 0 6px #e2e2e2; padding: 0 7px 5px 17px; display: flex; flex-direction: column; gap: 9px; }
.page-head { display: flex; justify-content: space-between; height: 50px; padding: 6px 92px 0 0; margin-left: -12px; }
.logo { display: flex; gap: 4px; color: #459079; padding-top: 7px; font: 600 18px/24px Inter, sans-serif; }
.logo svg { width: 39px; height: 15px; fill: #459079; stroke: none; margin-top: 5px; }
.slicers { width: 339px; height: 45px; background: #fff; border-radius: 18px; box-shadow: 4px 4px 6px #a8a8a8; display: flex; gap: 16px; padding: 2px 18px 0 21px; font-size: 9px; color: #605e5c; }
.dates { display: flex; gap: 5px; min-width: 0; width: 145px; flex-wrap: wrap; }
.dates legend, .country-head label { font-weight: 700; font-size: 8px; line-height: 10px; color: #222; }
.dates label { display: flex; align-items: center; width: 70px; height: 20px; margin-top: 3px; padding: 0 2px 0 5px; border: 1px solid #eee; font-size: 9px; color: #444; gap: 1px; }
.dates input { width: 51px; }
.dates svg { width: 10px; height: 9px; stroke: #777; }
.country { flex: 1; min-width: 0; }
.country-head { display: flex; align-items: center; height: 11px; }
.country-head svg { width: 5px; height: 3px; stroke: #666; }
.country-head .end { margin-left: auto; margin-right: 3px; }
.select { position: relative; height: 17px; margin-top: 3px; border: 1px solid #eee; }
.select select { appearance: none; width: 100%; height: 100%; padding-left: 4px; color: #888; font-size: 9px; }
.select svg { position: absolute; right: 4px; top: 5px; width: 8px; height: 5px; }
.row { display: grid; }
.top-row { grid-template-columns: 214fr 682fr; column-gap: 25px; margin-right: 9px; }
.bottom-row { grid-template-columns: 177fr 402fr 331fr; column-gap: 10px; }
.card { background: #fcfcfc; border-radius: 14px; box-shadow: 4px 4px 6px #a8a8a8; min-width: 0; }
.chart { width: 100%; height: auto; font-size: 9px; }
.kpis { padding: 2px 9px 0 0; text-align: center; display: flex; flex-direction: column; gap: 11px; background: #fff; }
.kpis dd { font: 26px/32px Roboto, sans-serif; color: #111; white-space: nowrap; }
.kpis dt { line-height: 19px; color: #666; }
.kpis .wide { padding-left: 12px; }
.bars { border-radius: 0; position: relative; }
.visual-tools { position: absolute; right: 1px; bottom: 100%; display: flex; gap: 3px; }
.visual-tools button { background: #fff; width: 25px; height: 24px; display: grid; place-items: center; }
.visual-tools svg { width: 16px; height: 16px; stroke: #666; }
.net { fill: #4a927d; } .gross { fill: #0f3b30; } .tax { fill: #abdbcf; }
.legend circle, .chart .net, .chart .tax, .handles { stroke: none; }
.grid { stroke: #dcdcdc; stroke-dasharray: 1 4; }
.legend { font-size: 10px; }
.legend text { fill: #605e5c; }
.legend.small { font-size: 9px; }
.ends { text-anchor: end; }
.mid { text-anchor: middle; }
.handles { fill: #a3a3a3; }
.line { fill: none; stroke-width: 2; }
.net-line { stroke: #4a927d; marker: url(#net-dot); }
.tax-line { stroke: #abdbcf; marker: url(#tax-dot); }

.matrix { margin-right: 4px; padding: 8px 7px 7px 9px; display: flex; align-items: flex-start; gap: 6px; }
.matrix table { flex: 1; border-collapse: collapse; font-size: 10px; line-height: 13px; color: #555; background: #fff; table-layout: fixed; width: 100%; }
.matrix th, .matrix td { padding: 1px 0; height: 15px; text-align: left; font-weight: 400; white-space: nowrap; }
.matrix thead th { padding: 0 0 0 4px; height: 20px; vertical-align: top; line-height: 16px; border-bottom: 1px solid #9cc3f0; }
.matrix thead th:first-child { width: 97px; }
.sorted::after { content: ""; display: block; width: 0; border: 3px solid transparent; border-top-color: #222; border-bottom: 0; }
.matrix td { text-align: right; padding-right: 4px; }
.matrix tbody th, .matrix tfoot th { border-right: 1px solid #9cc3f0; padding-left: 25px; }
.matrix tbody tr:nth-child(even) { background: #eeecec; }
.matrix .parent th, .matrix .parent td, .matrix tfoot th, .matrix tfoot td { font-weight: 600; color: #111; }
.matrix .parent th { padding-left: 4px; }
.matrix tfoot th { padding-left: 17px; }
.matrix tfoot tr { border-top: 3px solid #eeecec; }
.tog { display: inline-block; width: 7px; height: 7px; margin: 0 6px 1px 0; border: 1px solid #aaa; background: linear-gradient(#999, #999) center / 3px 1px no-repeat, linear-gradient(#999, #999) center / 1px 3px no-repeat; }
.tog.minus { background: linear-gradient(#999, #999) center / 3px 1px no-repeat; }
.scroll { width: 5px; align-self: stretch; margin: 0 0 12px; border-radius: 3px; background: #a9a9a9; }
.map { padding: 9px 8px 6px; position: relative; }
.corner { position: absolute; left: 5px; top: 3px; width: 12px; height: 6px; fill: #555; stroke: none; }
.specks { fill: #555; stroke: none; }
.sea { fill: #b3c7ef; stroke: none; } .land { fill: #eeedeb; stroke: none; } .ice { fill: #fbfbfb; stroke: none; }
.river { stroke: #b9cbee; stroke-width: 2; }
.places, .place { font-weight: 600; font-size: 9px; }
.places { text-anchor: middle; }
.place { text-anchor: end; }
svg .places text, svg .place { fill: #111; }
.oceans { text-anchor: middle; font-size: 9px; }
.oceans text { fill: #4668bb; }
.bubbles circle { fill: #4a927d; fill-opacity: .6; stroke: #2b6653; }
svg .bing { font-size: 7px; fill: #666; }
.credit { font-size: 6px; text-anchor: end; }
.credit a { fill: #3d5fc0; text-decoration: underline; }

/* Filters strip */
.filters { background: #fff; border-left: 1px solid #c8c6c4; display: flex; flex-direction: column; align-items: center; padding-top: 12px; gap: 15px; }
.filters svg { width: 13px; height: 13px; }
.flip { transform: scaleX(-1); }
.filters h2 { writing-mode: vertical-rl; font-size: 15px; font-weight: 600; line-height: 18px; margin-top: -8px; }

/* Page tabs */
.sheets { grid-column: 2 / 4; grid-row: 3; display: flex; }
.step { width: 20px; }
.step svg { width: 5px; height: 8px; margin: auto; fill: #c8c6c4; stroke: none; }
.sheet { width: 99px; padding-top: 4px; background: #fff; border-bottom: 1px solid #2b7a64; border-left: 1px solid #aaa; }
.add { width: 39px; background: #3b7a67; display: grid; place-items: center; margin-top: 2px; }
.add svg { width: 12px; height: 12px; fill: #fff; stroke: none; }

/* Side panes */
.viz, .data { grid-row: 2 / 4; display: flex; flex-direction: column; }
.viz { grid-column: 4; border-left: 1px solid #e1dfdd; }
.data { grid-column: 5; position: relative; min-width: 0; }
.pane-head { display: flex; justify-content: space-between; align-items: center; height: 20px; margin: 9px 8px 0; }
.pane-head h2 { font-size: 15px; font-weight: 600; }
.pane-head svg { width: 13px; height: 13px; }
.viz h3 { margin: 8px 8px 0; line-height: 16px; font-size: 11px; font-weight: 600; }
.modes { display: flex; justify-content: space-between; padding: 4px 9px 0; }
.modes button { width: 32px; height: 32px; display: grid; place-items: center; }
.modes .on { background: #cfcdcb; }
.modes svg { width: 26px; height: 26px; }
.notch { width: 18px; height: 10px; margin: 4px auto -1px; stroke: #a19f9d; z-index: 1; }
.cover { fill: #f3f2f1; stroke: none; }
.search { display: flex; align-items: center; gap: 6px; height: 26px; background: #fff; border: 1px solid #a19f9d; border-radius: 2px; padding-left: 7px; font-size: 13px; }
.search svg { width: 15px; height: 15px; stroke: #555; }
.search input { min-width: 0; width: 100px; outline: 0; }
.search input::placeholder { color: #605e5c; opacity: 1; }
.viz .search { position: relative; margin: 9px 8px 0 8px; }
.viz .search::before { content: ""; position: absolute; left: -9px; right: -9px; top: -10px; height: 1px; background: linear-gradient(90deg, #a19f9d 83px, transparent 83px 101px, #a19f9d 101px); }
.subtabs { display: flex; gap: 16px; padding: 13px 14px 0 12px; height: 56px; font-size: 13px; }
.subtabs button { height: 28px; border-bottom: 2px solid transparent; }
.subtabs .on { font-weight: 600; border-color: #2b7a64; }
.subtabs .more { margin-left: auto; }
.more svg { width: 16px; height: 16px; }
.options { position: relative; flex: 1; }
.opt { display: flex; align-items: center; height: 41px; margin-right: 8px; padding-left: 10px; border-bottom: 1px solid #e1dfdd; gap: 10px; }
.opt:nth-child(9) { border-bottom: 0; }
.opt button { display: flex; align-items: center; gap: 7px; font-weight: 600; margin-right: auto; }
.opt button:disabled { color: #a19f9d; }
.opt button:disabled svg { stroke: #a19f9d; }
.opt button svg { width: 7px; height: 13px; }
.warn { width: 15px; height: 15px; stroke: #8a8886; }
.switch { display: flex; align-items: center; justify-content: space-between; width: 32px; height: 16px; padding: 0 4px; border-radius: 8px; background: #5d5b59; color: #fff; font-size: 9px; }
.switch input { appearance: none; width: 8px; height: 8px; border-radius: 50%; background: #fff; }
.switch.off { background: #fff; border: 1px solid #8a8886; color: #777; }
.switch.off input { background: #555; }
.thumb { position: absolute; right: 0; background: #c8c6c4; }
.options .thumb { top: 0; width: 6px; height: 330px; }
.data .pane-head { margin-right: 2px; }
.data .search { margin: 17px 0 9px 4px; border-right: 0; flex: none; }
.tree { flex: 1; display: grid; grid-auto-rows: minmax(24px, 1fr); margin-left: 10px; color: #3b3a39; }
.tree li { display: flex; align-items: center; white-space: nowrap; position: relative; line-height: 16px; }
.tree button, .tree label { display: flex; align-items: center; }
.arrow { width: 7px; height: 13px; margin-right: 6px; stroke: #666; }
.arrow.down { width: 12px; height: 7px; margin: 0 3px 0 -2px; }
.tbl { width: 14px; height: 13px; margin-right: 5px; }
.badge { position: absolute; left: 20px; top: 12px; width: 12px; height: 12px; fill: #2b7a64; stroke: none; }
.badge path { stroke: #fff; fill: none; }
.tree input { appearance: none; display: grid; place-items: center; width: 12px; height: 12px; margin: 0 26px 0 29px; border: 1px solid #8a8886; border-radius: 2px; background: #f8f8f8; }
.tree input:checked { border-color: #2b7a64; background: #2b7a64; }
.tree input:checked::after { content: ""; width: 4px; height: 7px; margin-top: -2px; border: solid #fff; border-width: 0 1px 1px 0; transform: rotate(45deg); }
.data .thumb { top: 80px; width: 5px; height: 415px; }
.highlight { position: absolute; left: -3px; top: -4px; right: 4px; height: 477px; border: 4px solid #000; pointer-events: none; }
.collapse { position: absolute; right: -6px; top: -14px; width: 12px; height: 7px; stroke-width: 2; }
```
